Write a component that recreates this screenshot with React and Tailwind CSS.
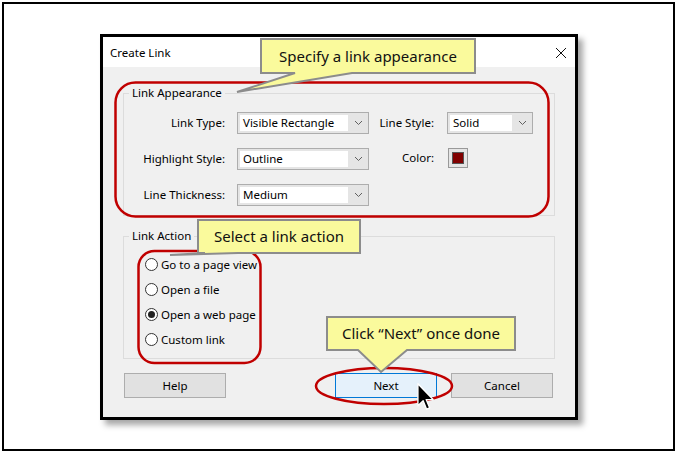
import React from "react";

const font = { fontFamily: '"Noto Sans", "Open Sans", sans-serif' };

const Chevron = () => (
  <svg width="9" height="6" viewBox="0 0 9 6">
    <polyline points="1,1 4.5,4.5 8,1" fill="none" stroke="#606060" strokeWidth="1" />
  </svg>
);

const Combo = ({ value, width }) => (
  <div className={`flex h-[22px] border border-[#adadad] bg-[#e5e5e5] ${width}`}>
    <div className="flex-1 my-[2px] ml-[2px] bg-white pl-[3px] text-[11.5px] leading-[16px] flex items-center">
      {value}
    </div>
    <div className="w-[20px] flex items-center justify-center">
      <Chevron />
    </div>
  </div>
);

const Radio = ({ label, checked }) => (
  <div className="flex items-center h-[25px]">
    <div className="w-[13px] h-[13px] rounded-full border border-[#333] bg-white flex items-center justify-center">
      {checked && <div className="w-[7px] h-[7px] rounded-full bg-[#222]" />}
    </div>
    <span className="ml-[3px] text-[11.5px]">{label}</span>
  </div>
);

const Callout = ({ x, y, w, h, tail, text }) => {
  // tail: [baseStart, baseEnd, tipX, tipY] in page coords, base lies on the bottom edge
  const pad = 6;
  const [b1, b2, tx, ty] = tail;
  const minX = Math.min(x, tx) - pad;
  const minY = y - pad;
  const maxX = x + w + pad;
  const maxY = Math.max(y + h, ty) + pad;
  const L = (px, py) => `${px - minX},${py - minY}`;
  const pts = [
    L(x, y),
    L(x + w, y),
    L(x + w, y + h),
    L(b2, y + h),
    L(tx, ty),
    L(b1, y + h),
    L(x, y + h),
  ].join(" ");
  return (
    <>
      <svg
        className="absolute"
        style={{ left: minX, top: minY }}
        width={maxX - minX}
        height={maxY - minY}
      >
        <polygon points={pts} fill="#fafa9c" stroke="#8c8c8c" strokeWidth="2" strokeLinejoin="miter" />
      </svg>
      <div
        className="absolute flex items-center justify-center text-[15px] text-[#111]"
        style={{ left: x, top: y, width: w, height: h }}
      >
        {text}
      </div>
    </>
  );
};

export default function App() {
  return (
    <div className="relative w-[678px] h-[454px] bg-white overflow-hidden text-black" style={font}>
      <div className="ml-[2px] mt-[2px] w-[673px] h-[449px] border-2 border-black">
        <div className="ml-[96px] mt-[30px] w-[478px] h-[386px] border-[3px] border-black bg-[#f0f0f0] shadow-[5px_5px_6px_rgba(0,0,0,0.35)] flex flex-col">
          {/* Title bar */}
          <div className="h-[30px] shrink-0 bg-white flex items-center justify-between pl-[7px] pr-[8px] pt-[1px]">
            <span className="text-[11.5px]">Create Link</span>
            <svg width="12" height="12" viewBox="0 0 12 12">
              <path d="M1 1 L11 11 M11 1 L1 11" stroke="#111" strokeWidth="1" />
            </svg>
          </div>

          <div className="px-[20px] flex flex-col">
            {/* Link Appearance */}
            <fieldset className="mt-[18px] border border-[#dcdcdc] p-0">
              <legend className="ml-[5px] px-[3px] text-[11.5px] leading-[16px]">Link Appearance</legend>
              <div className="pt-[11px] pb-[9px] flex flex-col gap-[14px] text-[11.5px]">
                <div className="flex items-center h-[22px]">
                  <span className="w-[101px] text-right">Link Type:</span>
                  <div className="ml-[12px]"><Combo value="Visible Rectangle" width="w-[132px]" /></div>
                  <span className="w-[65px] text-right">Line Style:</span>
                  <div className="ml-[13px]"><Combo value="Solid" width="w-[86px]" /></div>
                </div>
                <div className="flex items-center h-[22px]">
                  <span className="w-[101px] text-right">Highlight Style:</span>
                  <div className="ml-[12px]"><Combo value="Outline" width="w-[132px]" /></div>
                  <span className="w-[65px] text-right -mt-[3px]">Color:</span>
                  <div className="ml-[14px] -mt-[2px] w-[20px] h-[20px] border border-[#999] bg-[#e5e5e5] p-[3px]">
                    <div className="w-full h-full bg-[#800000] border border-[#555]" />
                  </div>
                </div>
                <div className="flex items-center h-[22px]">
                  <span className="w-[101px] text-right">Line Thickness:</span>
                  <div className="ml-[12px]"><Combo value="Medium" width="w-[132px]" /></div>
                </div>
              </div>
            </fieldset>

            {/* Link Action */}
            <fieldset className="mt-[12px] border border-[#dcdcdc] p-0">
              <legend className="ml-[5px] px-[3px] text-[11.5px] leading-[16px]">Link Action</legend>
              <div className="pl-[21px] pt-[8px] pb-[6px] flex flex-col">
                <Radio label="Go to a page view" />
                <Radio label="Open a file" />
                <Radio label="Open a web page" checked />
                <Radio label="Custom link" />
              </div>
            </fieldset>

            {/* Buttons */}
            <div className="mt-[14px] flex items-center text-[11.5px]">
              <button className="ml-[1px] w-[102px] h-[25px] bg-[#e1e1e1] border border-[#adadad]">Help</button>
              <div className="flex-1" />
              <button className="w-[102px] h-[25px] bg-[#e5f1fb] border border-[#0078d7]">Next</button>
              <button className="ml-[14px] mr-[2px] w-[102px] h-[25px] bg-[#e1e1e1] border border-[#adadad]">Cancel</button>
            </div>
          </div>
        </div>
      </div>

      {/* Red annotations */}
      <svg className="absolute left-0 top-0 pointer-events-none" width="678" height="454">
        <rect x="115.5" y="82.5" width="433" height="134" rx="20" fill="none" stroke="#c00000" strokeWidth="2.5" />
        <rect x="138.5" y="251" width="122" height="112" rx="16" fill="none" stroke="#c00000" strokeWidth="2.5" />
        <ellipse cx="384" cy="386" rx="68" ry="18" fill="none" stroke="#c00000" strokeWidth="2.5" />
      </svg>

      {/* Callouts */}
      <Callout x={261} y={39} w={214} h={34} tail={[295, 352, 237, 92]} text="Specify a link appearance" />
      <Callout x={198} y={220} w={162} h={33} tail={[205, 238, 170, 255]} text="Select a link action" />
      <Callout x={327} y={317} w={188} h={33} tail={[358, 407, 381, 372]} text="Click “Next” once done" />

      {/* Cursor */}
      <svg className="absolute left-[417px] top-[383px]" width="17" height="29" viewBox="0 0 12 21">
        <path d="M0.5 0.5 L0.5 16.5 L4.3 12.8 L6.8 19 L9 18 L6.5 12 L11.5 12 Z" fill="#000" stroke="#fff" strokeWidth="1" strokeLinejoin="round" />
      </svg>
    </div>
  );
}
